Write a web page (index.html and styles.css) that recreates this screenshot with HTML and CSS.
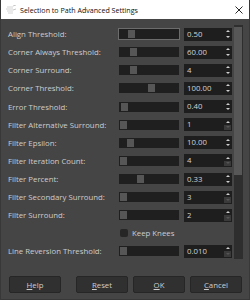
FILE: index.html
```html
<!DOCTYPE html>
<html>
<head>
<meta charset="utf-8">
<link rel="stylesheet" href="styles.css">
</head>
<body>
<div class="window">
  <div class="titlebar">
    <svg class="appicon" width="11" height="10" viewBox="0 0 11 10">
      <path d="M1 2h6M0 4h7M1 6h6M2 8h5" stroke="#d4d4d4" stroke-width="1" fill="none"/>
      <path d="M7 1 L10 0 M7 5 L10 4" stroke="#c8c8c8" stroke-width="1" fill="none"/>
    </svg>
    <span class="title">Selection to Path Advanced Settings</span>
    <svg class="close" width="8" height="8" viewBox="0 0 8 8">
      <path d="M0.5 0.5 L7.5 7.5 M7.5 0.5 L0.5 7.5" stroke="#111" stroke-width="0.9"/>
    </svg>
  </div>
  <div class="body">
    <div class="scroller">
      <div class="rows">
        <div class="row"><span class="label">Align Threshold:</span><div class="trough focus"><div class="handle" style="margin-left:9px"></div></div><div class="spin"><span class="val">0.50</span><span class="arrows"><i class="up"></i><i class="down"></i></span></div></div>
        <div class="row"><span class="label">Corner Always Threshold:</span><div class="trough"><div class="handle" style="margin-left:11px"></div></div><div class="spin"><span class="val">60.00</span><span class="arrows"><i class="up"></i><i class="down"></i></span></div></div>
        <div class="row"><span class="label">Corner Surround:</span><div class="trough"><div class="handle" style="margin-left:11px"></div></div><div class="spin"><span class="val">4</span><span class="arrows"><i class="up"></i><i class="down"></i></span></div></div>
        <div class="row"><span class="label">Corner Threshold:</span><div class="trough"><div class="handle" style="margin-left:29px"></div></div><div class="spin"><span class="val">100.00</span><span class="arrows"><i class="up"></i><i class="down"></i></span></div></div>
        <div class="row"><span class="label">Error Threshold:</span><div class="trough"><div class="handle" style="margin-left:2px"></div></div><div class="spin"><span class="val">0.40</span><span class="arrows"><i class="up"></i><i class="down"></i></span></div></div>
        <div class="row"><span class="label">Filter Alternative Surround:</span><div class="trough"><div class="handle" style="margin-left:1px"></div></div><div class="spin"><span class="val">1</span><span class="arrows"><i class="up"></i><i class="down off"></i></span></div></div>
        <div class="row"><span class="label">Filter Epsilon:</span><div class="trough"><div class="handle" style="margin-left:8px"></div></div><div class="spin"><span class="val">10.00</span><span class="arrows"><i class="up"></i><i class="down"></i></span></div></div>
        <div class="row"><span class="label">Filter Iteration Count:</span><div class="trough"><div class="handle" style="margin-left:1px"></div></div><div class="spin"><span class="val">4</span><span class="arrows"><i class="up"></i><i class="down off"></i></span></div></div>
        <div class="row"><span class="label">Filter Percent:</span><div class="trough"><div class="handle" style="margin-left:18px"></div></div><div class="spin"><span class="val">0.33</span><span class="arrows"><i class="up"></i><i class="down"></i></span></div></div>
        <div class="row"><span class="label">Filter Secondary Surround:</span><div class="trough"><div class="handle" style="margin-left:1px"></div></div><div class="spin"><span class="val">3</span><span class="arrows"><i class="up"></i><i class="down off"></i></span></div></div>
        <div class="row"><span class="label">Filter Surround:</span><div class="trough"><div class="handle" style="margin-left:1px"></div></div><div class="spin"><span class="val">2</span><span class="arrows"><i class="up"></i><i class="down off"></i></span></div></div>
        <div class="row check-row"><span class="label"></span><label class="check"><span class="box"></span><span class="check-text">Keep Knees</span></label></div>
        <div class="row last"><span class="label">Line Reversion Threshold:</span><div class="trough"><div class="handle" style="margin-left:1px"></div></div><div class="spin"><span class="val">0.010</span><span class="arrows"><i class="up"></i><i class="down off"></i></span></div></div>
      </div>
      <div class="scrollbar"><div class="thumb"></div></div>
    </div>
    <div class="buttons">
      <button class="btn"><u>H</u>elp</button>
      <div class="right">
        <button class="btn"><u>R</u>eset</button>
        <button class="btn"><u>O</u>K</button>
        <button class="btn"><u>C</u>ancel</button>
      </div>
    </div>
  </div>
</div>
</body>
</html>
```
FILE: styles.css
```css
* { box-sizing: border-box; }
html, body { margin: 0; padding: 0; }
body {
  width: 250px;
  height: 300px;
  overflow: hidden;
  background: #454545;
  font-family: "Open Sans", "Noto Sans", sans-serif;
  font-size: 7.8px;
  color: #cdcdcd;
}
.window {
  width: 250px;
  height: 300px;
  display: flex;
  flex-direction: column;
  border-left: 1px solid #383838;
  border-right: 1px solid #383838;
  border-bottom: 1px solid #383838;
}
.titlebar {
  height: 19px;
  background: #ffffff;
  display: flex;
  align-items: center;
  padding-left: 5px;
  padding-right: 6px;
  color: #000;
}
.appicon { margin-right: 3px; }
.title { flex: 1; font-size: 7.1px; color: #111; }
.body {
  flex: 1;
  display: flex;
  flex-direction: column;
  padding: 6px 0 0 7px;
}
.scroller {
  display: flex;
  height: 235px;
}
.rows {
  width: 225px;
  display: flex;
  flex-direction: column;
}
.row {
  height: 18.55px;
  display: flex;
  align-items: center;
}
.row.check-row { height: 18px; }
.label { width: 111px; flex: none; }
.trough {
  width: 60px;
  height: 10px;
  background: #1f1f1f;
  display: flex;
  align-items: center;
  flex: none;
}
.trough.focus { outline: 1px solid #6c6c6c; }
.handle {
  width: 7px;
  height: 8px;
  background: #565656;
}
.spin {
  margin-left: 5px;
  width: 48px;
  height: 13px;
  background: #1e1e1e;
  display: flex;
  flex: none;
}
.val { flex: 1; padding-left: 3px; line-height: 13px; color: #d2d2d2; }
.arrows {
  width: 9px;
  display: flex;
  flex-direction: column;
  align-items: center;
  padding: 1px 0;
}
.arrows i {
  display: block;
  width: 7px;
  height: 5.5px;
  position: relative;
}
.arrows i::after {
  content: "";
  position: absolute;
  left: 1.5px;
  top: 1.5px;
  border-left: 2px solid transparent;
  border-right: 2px solid transparent;
}
.arrows .up::after { border-bottom: 2.5px solid #cfcfcf; }
.arrows .down::after { border-top: 2.5px solid #cfcfcf; }
.arrows .down.off { background: #3a3a3a; }
.arrows .down.off::after { border-top-color: #555; }
.check { display: flex; align-items: center; margin-left: 1px; }
.box {
  width: 8px;
  height: 8px;
  border-radius: 2px;
  background: #262626;
  margin-right: 4px;
}
.check-text { color: #cdcdcd; }
.scrollbar {
  width: 9px;
  margin-left: 1px;
  background: #2e2e2e;
  padding: 2px 1px 0 0;
  height: 234px;
}
.thumb {
  height: 148px;
  background: #575757;
}
.buttons {
  margin-top: 16px;
  display: flex;
  justify-content: space-between;
  padding-right: 7px;
  padding-left: 1px;
}
.right { display: flex; gap: 5px; }
.btn {
  width: 52px;
  height: 17px;
  background: #303030;
  border: 1px solid #262626;
  border-radius: 2px;
  color: #cdcdcd;
  font-family: "Open Sans", "Noto Sans", sans-serif;
  font-size: 7.8px;
  padding: 0;
}
.btn u { text-decoration-thickness: 1px; text-underline-offset: 1px; }
```
